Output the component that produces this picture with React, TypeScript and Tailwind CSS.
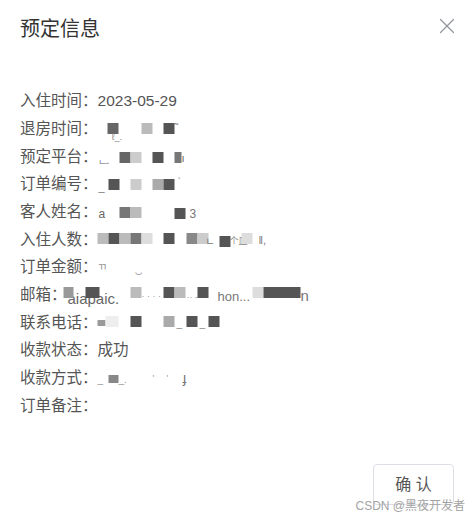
import { X } from 'lucide-react'

type Mark =
  | { x: number; w: number; c: string; dy?: number; h?: number }
  | { x: number; t: string; dy?: number; c?: string; s?: number }

interface Row {
  label: string
  value?: string
  marks?: Mark[]
}

// pixelated (redacted) values — x is the page x of each block
const ROWS: Row[] = [
  { label: '入住时间', value: '2023-05-29' },
  {
    label: '退房时间',
    marks: [
      { x: 107, w: 11, c: '#666' },
      { x: 111, t: 'ℓ_.', dy: 6, s: 9, c: '#888' },
      { x: 141, w: 11, c: '#bbb' },
      { x: 163, w: 11, c: '#555' },
      { x: 174, t: '˜', dy: -3, s: 11, c: '#777' }
    ]
  },
  {
    label: '预定平台',
    marks: [
      { x: 98, t: 'ட.', dy: 3, s: 10, c: '#666' },
      { x: 119, w: 11, c: '#666', dy: 2 },
      { x: 130, w: 11, c: '#ccc', dy: 2 },
      { x: 152, w: 11, c: '#555', dy: 2 },
      { x: 174, w: 7, c: '#777', dy: 2 },
      { x: 181, t: 'ı', dy: 1, s: 11, c: '#666' }
    ]
  },
  {
    label: '订单编号',
    marks: [
      { x: 98, t: '_', dy: 2, s: 11, c: '#777' },
      { x: 108, w: 11, c: '#555', dy: 1 },
      { x: 130, w: 11, c: '#ccc', dy: 1 },
      { x: 152, w: 11, c: '#aaa', dy: 1 },
      { x: 163, w: 11, c: '#555', dy: 1 },
      { x: 177, t: 'ˋ', dy: -3, s: 10, c: '#777' }
    ]
  },
  {
    label: '客人姓名',
    marks: [
      { x: 98, t: 'a', dy: 1, s: 12, c: '#666' },
      { x: 119, w: 11, c: '#777', dy: 1 },
      { x: 130, w: 11, c: '#bbb', dy: 1 },
      { x: 174, w: 11, c: '#555', dy: 2 },
      { x: 189, t: '3', dy: 1, s: 12, c: '#777' }
    ]
  },
  {
    label: '入住人数',
    marks: [
      { x: 97, w: 11, c: '#bbb' },
      { x: 108, w: 11, c: '#555' },
      { x: 119, w: 11, c: '#bbb' },
      { x: 130, w: 11, c: '#777' },
      { x: 141, w: 11, c: '#ddd' },
      { x: 163, w: 11, c: '#555' },
      { x: 186, w: 11, c: '#888' },
      { x: 197, w: 11, c: '#ccc' },
      { x: 205, t: 'ㄴ', dy: 1, s: 10, c: '#777' },
      { x: 219, w: 11, c: '#555', dy: 3 },
      { x: 229, t: '个皿', dy: 0, s: 9, c: '#888' },
      { x: 241, w: 11, c: '#ddd' },
      { x: 258, t: '‖,', dy: 0, s: 11, c: '#777' }
    ]
  },
  {
    label: '订单金额',
    marks: [
      { x: 97, t: 'ㄲ', dy: -1, s: 10, c: '#888' },
      { x: 134, t: '‿', dy: 0, s: 12, c: '#999' }
    ]
  },
  {
    label: '邮箱',
    marks: [
      { x: 67, t: 'aiapaic.', dy: 4, s: 15, c: '#666' },
      { x: 63, w: 10, c: '#999', dy: -2 },
      { x: 85, w: 14, c: '#555', dy: -2 },
      { x: 130, w: 11, c: '#bbb', dy: -2 },
      { x: 141, t: '· · · ·', dy: -1, s: 9, c: '#999' },
      { x: 163, w: 11, c: '#555', dy: -2 },
      { x: 174, w: 11, c: '#bbb', dy: -2 },
      { x: 186, t: '·· -', dy: 0, s: 9, c: '#999' },
      { x: 197, w: 11, c: '#555', dy: -2 },
      { x: 217, t: 'hon...', dy: 1, s: 13, c: '#777' },
      { x: 252, w: 11, c: '#ddd', dy: -2 },
      { x: 263, w: 37, c: '#555', dy: -2 },
      { x: 300, t: 'n', dy: 1, s: 15, c: '#777' }
    ]
  },
  {
    label: '联系电话',
    marks: [
      { x: 97, w: 8, c: '#999', dy: -1, h: 6 },
      { x: 105, w: 13, c: '#eee' },
      { x: 130, w: 11, c: '#555' },
      { x: 163, w: 11, c: '#aaa' },
      { x: 176, t: '_', dy: 0, s: 10, c: '#888' },
      { x: 186, w: 11, c: '#555' },
      { x: 199, t: '_', dy: 0, s: 10, c: '#888' },
      { x: 208, w: 11, c: '#555' }
    ]
  },
  { label: '收款状态', value: '成功' },
  {
    label: '收款方式',
    marks: [
      { x: 97, t: '_', dy: 0, s: 10, c: '#999' },
      { x: 108, w: 10, c: '#888', dy: 0, h: 8 },
      { x: 118, t: '_.', dy: 0, s: 10, c: '#999' },
      { x: 152, t: "'", dy: -2, s: 9, c: '#999' },
      { x: 166, t: "'", dy: -2, s: 9, c: '#999' },
      { x: 182, t: 'ɟ', dy: 0, s: 14, c: '#777' }
    ]
  },
  { label: '订单备注' }
]

const FONT = '"Liberation Sans", "Noto Sans CJK SC", sans-serif'

function Redacted({ marks, start }: { marks: Mark[]; start: number }): JSX.Element {
  return (
    <svg width={330} height={28} className="overflow-visible" style={{ marginLeft: 0 }}>
      {marks.map((m, i) =>
        'w' in m ? (
          <rect
            key={i}
            x={m.x - start}
            y={8 + (m.dy ?? 0) + (11 - (m.h ?? 11))}
            width={m.w}
            height={m.h ?? 11}
            fill={m.c}
          />
        ) : (
          <text
            key={i}
            x={m.x - start}
            y={19 + (m.dy ?? 0)}
            fontSize={m.s ?? 12}
            fill={m.c ?? '#777'}
            fontFamily={FONT}
          >
            {m.t}
          </text>
        )
      )}
    </svg>
  )
}

export default function App(): JSX.Element {
  return (
    <div
      className="relative flex h-[516px] w-[474px] flex-col overflow-hidden bg-white"
      style={{ fontFamily: FONT }}
    >
      <header className="flex items-start justify-between pl-5 pr-[14px] pt-[16px]">
        <h1 className="text-[20px] leading-[26px] text-[#333]">预定信息</h1>
        <X className="mt-[-3px] text-[#909399]" size={26} strokeWidth={1.1} />
      </header>

      <div className="mt-[45px] flex flex-col px-5 text-[15.5px] text-[#555]">
        {ROWS.map((r) => {
          const start = 20 + (r.label.length + 1) * 15.5
          return (
            <div key={r.label} className="flex h-[27.7px] items-center whitespace-nowrap">
              <span>{r.label}：</span>
              {r.value && <span>{r.value}</span>}
              {r.marks && <Redacted marks={r.marks} start={start} />}
            </div>
          )
        })}
      </div>

      <footer className="mt-[45px] flex justify-end px-5">
        <button className="h-[41px] w-[81px] rounded-[4px] border border-[#dcdfe6] bg-white text-[16px] text-[#555]">
          确 认
        </button>
      </footer>

      <span className="absolute bottom-[3px] right-[9px] text-[12px] leading-[14px] text-[#a3a3a3]">
        CSDN @黑夜开发者
      </span>
    </div>
  )
}
